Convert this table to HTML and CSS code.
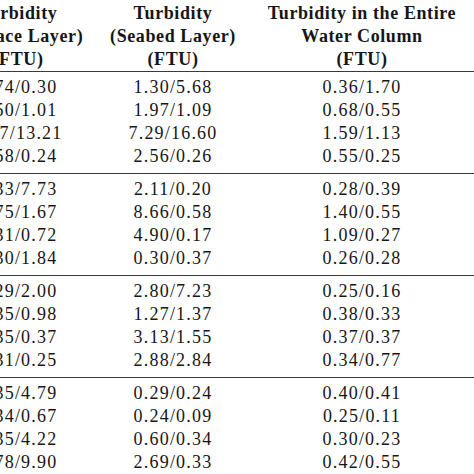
FILE: index.html
```html
<!DOCTYPE html>
<html>
<head>
<meta charset="utf-8">
<link rel="stylesheet" href="styles.css">
</head>
<body>
<div class="viewport">
  <div class="table">
    <div class="head">
      <div class="cell">Turbidity<br>(Surface Layer)<br>(FTU)</div>
      <div class="cell">Turbidity<br>(Seabed Layer)<br>(FTU)</div>
      <div class="cell">Turbidity in the Entire<br>Water Column<br>(FTU)</div>
    </div>
    <div class="group">
      <div class="cell">0.74/0.30</div><div class="cell">1.30/5.68</div><div class="cell">0.36/1.70</div>
      <div class="cell">0.50/1.01</div><div class="cell">1.97/1.09</div><div class="cell">0.68/0.55</div>
      <div class="cell">2.77/13.21</div><div class="cell">7.29/16.60</div><div class="cell">1.59/1.13</div>
      <div class="cell">0.58/0.24</div><div class="cell">2.56/0.26</div><div class="cell">0.55/0.25</div>
    </div>
    <div class="group">
      <div class="cell">0.33/7.73</div><div class="cell">2.11/0.20</div><div class="cell">0.28/0.39</div>
      <div class="cell">0.75/1.67</div><div class="cell">8.66/0.58</div><div class="cell">1.40/0.55</div>
      <div class="cell">0.31/0.72</div><div class="cell">4.90/0.17</div><div class="cell">1.09/0.27</div>
      <div class="cell">0.30/1.84</div><div class="cell">0.30/0.37</div><div class="cell">0.26/0.28</div>
    </div>
    <div class="group">
      <div class="cell">0.29/2.00</div><div class="cell">2.80/7.23</div><div class="cell">0.25/0.16</div>
      <div class="cell">0.35/0.98</div><div class="cell">1.27/1.37</div><div class="cell">0.38/0.33</div>
      <div class="cell">0.35/0.37</div><div class="cell">3.13/1.55</div><div class="cell">0.37/0.37</div>
      <div class="cell">0.31/0.25</div><div class="cell">2.88/2.84</div><div class="cell">0.34/0.77</div>
    </div>
    <div class="group">
      <div class="cell">0.35/4.79</div><div class="cell">0.29/0.24</div><div class="cell">0.40/0.41</div>
      <div class="cell">0.34/0.67</div><div class="cell">0.24/0.09</div><div class="cell">0.25/0.11</div>
      <div class="cell">0.35/4.22</div><div class="cell">0.60/0.34</div><div class="cell">0.30/0.23</div>
      <div class="cell">0.78/9.90</div><div class="cell">2.69/0.33</div><div class="cell">0.42/0.55</div>
    </div>
  </div>
</div>
</body>
</html>
```

FILE: styles.css
```css
html, body {
  margin: 0;
  padding: 0;
  background: #ffffff;
}
.viewport {
  width: 474px;
  height: 474px;
  overflow: hidden;
}
.table {
  margin-left: -60px;
  width: 534px;
  font-family: "Liberation Serif", "Times New Roman", serif;
  font-size: 18px;
  color: #161616;
}
.head, .group {
  display: grid;
  grid-template-columns: 156px 154px 224px;
}
.head {
  font-weight: bold;
  line-height: 23px;
  padding-top: 2px;
  letter-spacing: 0.6px;
  border-bottom: 1.5px solid #3a3a3a;
}
.group {
  line-height: 23px;
  padding: 4px 0 5px;
  letter-spacing: 1.2px;
  border-bottom: 1.5px solid #3a3a3a;
}
.cell {
  text-align: center;
  white-space: nowrap;
}
```
